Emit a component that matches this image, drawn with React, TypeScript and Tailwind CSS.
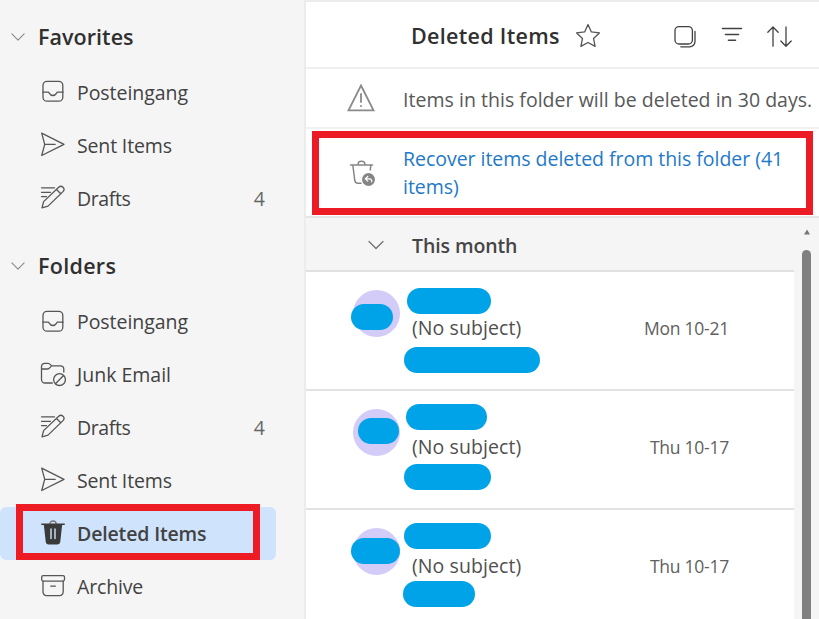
import type { ReactNode } from 'react';

function Svg({ children, className = '', box = '0 0 24 24', stroke = 1.3 }: { children: ReactNode; className?: string; box?: string; stroke?: number }) {
  return (
    <svg viewBox={box} className={`shrink-0 ${className}`} fill="none" stroke="currentColor" strokeWidth={stroke} strokeLinecap="round" strokeLinejoin="round">
      {children}
    </svg>
  );
}

const ICON = 'h-[26px] w-[26px] text-[#565656]';

function InboxIcon() {
  return (
    <Svg className={ICON} box="0 0 26 26">
      <rect x="3" y="2.400" width="19.800" height="19.800" rx="4" />
      <path d="M3 13.200h5.400c.8 0 1.200 3.300 4.500 3.300s3.700-3.300 4.500-3.300H23" />
    </Svg>
  );
}

function SendIcon() {
  return (
    <Svg className={ICON} box="0 0 26 26">
      <path d="M1.700 1.200 24 12.300 1.700 23.500 4.700 12.300zM4.700 12.300h10.500" />
    </Svg>
  );
}

function DraftsIcon() {
  return (
    <Svg className={ICON} box="0 0 26 26">
      <path d="M1.500 2.800h13M1.500 7.300h9M1.500 11.600h5" />
      <path d="M2 22.800l1.600-6.200L18.700 2.300a3 3 0 0 1 4.300 4.300L8 21.100zM16.500 4.500l4.300 4.300" />
    </Svg>
  );
}

function JunkIcon() {
  return (
    <Svg className={ICON} box="0 0 26 26">
      <path d="M12.300 21H5a3.500 3.500 0 0 1-3.500-3.500v-13A3.200 3.200 0 0 1 4.700 1.300h3.500c1.500 0 2.200 1.700 3.600 2.500h8.700A3.300 3.300 0 0 1 23.800 7v3M1.500 7h6.200c1.700 0 2.500-2.200 4.100-3.200" />
      <circle cx="19.500" cy="17.600" r="5.900" />
      <path d="M15.400 21.700l8.200-8.200" />
    </Svg>
  );
}

function TrashIcon() {
  return (
    <Svg className="h-[26px] w-[26px] text-[#3a3a3a]" box="0 0 26 26">
      <path d="M9.800 4C9.800 0 16.200 0 16.200 4" stroke="#777" />
      <path d="M1.800 4.300h22.400" strokeWidth="1.500" />
      <path d="M3.800 4.500h18.400l-1.900 17a3.200 3.200 0 0 1-3.200 2.900H9A3.200 3.200 0 0 1 5.700 21.500z" fill="currentColor" stroke="none" />
      <path d="M11 9v9.500M15 9v9.500" stroke="#cfe4fa" strokeWidth="1.400" />
    </Svg>
  );
}

function ArchiveIcon() {
  return (
    <Svg className={ICON} box="0 0 26 26">
      <rect x="1.700" y="2.600" width="22.800" height="5.500" rx="1.500" />
      <path d="M3 8.100v11a3.500 3.500 0 0 0 3.500 3.500h13.200a3.500 3.500 0 0 0 3.500-3.500v-11M10.700 13.100h4.700" />
    </Svg>
  );
}

function Chevron({ className = '' }: { className?: string }) {
  return (
    <Svg className={className} box="0 0 16 16">
      <path d="M1 4.500l7 7 7-7" />
    </Svg>
  );
}

function Section({ title, track }: { title: string; track: string }) {
  return (
    <div className="flex h-[58px] items-center pl-[11px]">
      <Chevron className="mr-[13px] h-[14px] w-[14px] text-[#8a8a8a]" />
      <span className={`text-[21.500px] font-semibold text-[#303030] ${track}`}>{title}</span>
    </div>
  );
}

type RowProps = { icon: ReactNode; label: string; track: string; count?: number; selected?: boolean };

function Row({ icon, label, track, count, selected }: RowProps) {
  return (
    <div className={`relative flex h-[52.900px] w-[276px] items-center rounded-md pl-[40px] pr-[11px] text-[19.500px] text-[#424242] ${selected ? 'bg-[#cfe4fc] font-semibold' : ''}`}>
      {icon}
      <span className={`ml-[11px] flex-1 pt-px ${track}`}>{label}</span>
      {count !== undefined && <span className="pt-px text-[#666]">{count}</span>}
      {selected && <span className="absolute -top-[3px] left-4 h-[56px] w-[244px] border-[7px] border-[#ed1c24]" />}
    </div>
  );
}

type Mail = { date: string; mask: string; name: string; preview: string };

const MAILS: Mail[] = [
  { date: 'Mon 10-21', mask: '-left-[2px] top-[14px] w-[42px]', name: 'ml-[7px] mt-[16px] w-[84px]', preview: 'ml-[4px] mt-[33px] w-[136px]' },
  { date: 'Thu 10-17', mask: 'left-[5px] top-[9px] w-[41px]', name: 'ml-[6px] mt-[13px] w-[81px]', preview: 'ml-[4px] mt-[34px] w-[87px]' },
  { date: 'Thu 10-17', mask: '-left-[2px] top-[10px] w-[49px]', name: 'ml-[4px] mt-[13px] w-[87px]', preview: 'ml-[3px] mt-[32px] w-[72px]' },
];

function MailRow({ mail }: { mail: Mail }) {
  return (
    <div className="flex h-[119px] shrink-0 border-b-2 border-[#e3e3e3] bg-white pl-[47px]">
      <div className="relative mt-[18px] h-[47px] w-[47px] shrink-0 rounded-full bg-[#d3cbf8]">
        <span className={`absolute h-[26px] rounded-full bg-[#00a2e8] ${mail.mask}`} />
      </div>
      <div className="relative w-[244px]">
        <div className={`h-[26px] rounded-full bg-[#00a2e8] ${mail.name}`} />
        <span className="absolute left-[12px] top-[42px] text-[19.500px] leading-[28px] tracking-[0.080px] text-[#505050]">(No subject)</span>
        <div className={`h-[26px] rounded-full bg-[#00a2e8] ${mail.preview}`} />
      </div>
      <span className="ml-auto mr-[65px] mt-[42px] text-[17.500px] leading-[28px] tracking-[-0.250px] text-[#606060]">{mail.date}</span>
    </div>
  );
}

export default function App() {
  return (
    <div className="flex h-[619px] w-[819px] overflow-hidden bg-[#f5f5f5] font-['Open_Sans','Noto_Sans',sans-serif]">
      <nav className="w-[304px] shrink-0 pt-[8px]">
        <Section title="Favorites" track="tracking-[0.050px]" />
        <Row icon={<InboxIcon />} label="Posteingang" track="tracking-[-0.050px]" />
        <Row icon={<SendIcon />} label="Sent Items" track="tracking-[-0.150px]" />
        <Row icon={<DraftsIcon />} label="Drafts" track="tracking-[-0.400px]" count={4} />
        <div className="h-[12.500px]" />
        <Section title="Folders" track="tracking-[0.300px]" />
        <Row icon={<InboxIcon />} label="Posteingang" track="tracking-[-0.050px]" />
        <Row icon={<JunkIcon />} label="Junk Email" track="tracking-[0px]" />
        <Row icon={<DraftsIcon />} label="Drafts" track="tracking-[-0.400px]" count={4} />
        <Row icon={<SendIcon />} label="Sent Items" track="tracking-[-0.150px]" />
        <Row icon={<TrashIcon />} label="Deleted Items" track="tracking-[-0.150px]" selected />
        <Row icon={<ArchiveIcon />} label="Archive" track="tracking-[-0.150px]" />
      </nav>
      <main className="flex min-w-0 flex-1 flex-col border-l-2 border-t-2 border-[#ececec] bg-white">
        <header className="flex h-[67px] shrink-0 items-center border-b-2 border-[#f0f0f0] pl-[105px] pt-[2px] text-[#424242]">
          <h1 className="w-[164px] whitespace-nowrap pt-[2px] text-[21.500px] font-semibold tracking-[0.300px] text-[#303030]">Deleted Items</h1>
          <Svg className="h-[26px] w-[26px] text-[#555]" box="0 0 26 26">
            <path d="M13 1.500l3.400 7.400 8 1-5.900 5.500 1.600 8L13 19.500l-7.100 3.900 1.600-8L1.600 9.900l8-1z" />
          </Svg>
          <Svg className="ml-[72px] h-[26px] w-[26px]" box="0 0 26 26">
            <rect x="2" y="3.600" width="17.400" height="17.400" rx="4" />
            <path d="M22 8.500v10a5.300 5.300 0 0 1-5.300 5.300H7.800" />
          </Svg>
          <Svg className="ml-[20px] h-[26px] w-[26px]" box="0 0 26 26" stroke={1.6}>
            <path d="M3.500 5.500h19M6.500 11.500h13M9.500 17.300h7" />
          </Svg>
          <Svg className="ml-[20px] h-[28px] w-[28px]" box="0 0 28 28">
            <path d="M8 24.200V5M2.800 10.200L8 5l5.200 5.200M21 5v19.200M15.800 19L21 24.200l5.200-5.200" />
          </Svg>
        </header>
        <div className="flex h-[60px] shrink-0 items-center border-b-2 border-[#f2f2f2] pl-[41px]">
          <Svg className="h-[30px] w-[28px] text-[#8a8a8a]" box="0 0 28 30" stroke={1.8}>
            <path d="M14 2.500L26.500 27.300h-25z" strokeLinejoin="miter" />
            <path d="M14 11v8M14 23v.2" />
          </Svg>
          <span className="ml-[28px] whitespace-nowrap pt-[4px] text-[19.500px] tracking-[0.030px] text-[#585858]">Items in this folder will be deleted in 30 days.</span>
        </div>
        <div className="relative flex h-[89px] shrink-0 items-center border-b-2 border-[#e6e6e6] pl-[43px]">
          <Svg className="mt-[2px] h-[28px] w-[28px] text-[#858585]" box="0 0 28 28" stroke={1.5}>
            <path d="M1.500 5h22M9 4.500c0-4.300 7-4.300 7 0M3.800 5l2 15.500a3.200 3.200 0 0 0 3.200 2.800h3M21.800 5l-.5 5" />
            <circle cx="19.500" cy="19.500" r="6.500" fill="currentColor" stroke="none" />
            <path d="M18.800 16.500l-2.500 2.300 2.500 2.300M16.500 18.800h4c1.500 0 2.300 1 2.300 3" stroke="white" strokeWidth="1.200" />
          </Svg>
          <a className="ml-[26px] whitespace-nowrap text-[19.500px] leading-[28px] tracking-[-0.030px] text-[#2279c9]">
            Recover items deleted from this folder (41
            <br />
            items)
          </a>
          <span className="absolute left-[6px] top-[2px] h-[84px] w-[501px] border-[7px] border-[#ed1c24]" />
        </div>
        <div className="flex min-h-0 flex-1 bg-[#f5f5f5]">
          <section className="flex w-[488px] flex-col overflow-hidden">
            <div className="flex h-[54px] shrink-0 items-center border-b-2 border-[#e0e0e0] pl-[62px]">
              <Chevron className="mt-px h-4 w-4 text-[#707070]" />
              <h2 className="ml-[28px] pt-[4px] text-[19.500px] font-semibold tracking-[-0.100px] text-[#454545]">This month</h2>
            </div>
            {MAILS.map((mail, i) => (
              <MailRow key={i} mail={mail} />
            ))}
          </section>
          <div className="flex flex-1 flex-col items-center pt-[11px]">
            <svg viewBox="0 0 8 6" className="h-[6px] w-[8px]"><path d="M4 0.500l3 5H1z" fill="#777" /></svg>
            <div className="mt-[15px] w-[9px] flex-1 rounded-t-full bg-[#808080]" />
          </div>
        </div>
      </main>
    </div>
  );
}
